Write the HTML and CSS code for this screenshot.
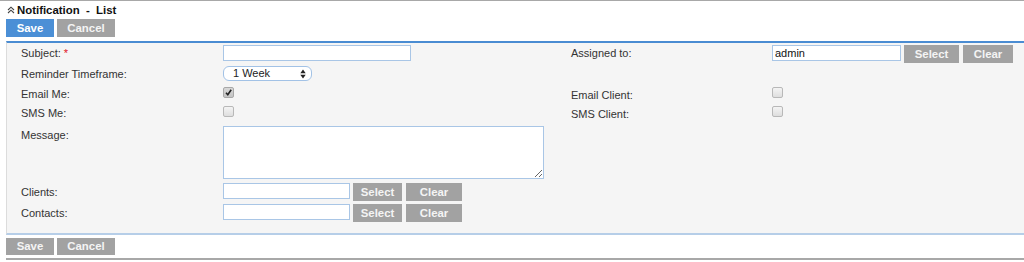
FILE: index.html
```html
<!DOCTYPE html>
<html>
<head>
<meta charset="utf-8">
<link rel="stylesheet" href="styles.css">
</head>
<body>
<div class="page">
  <div class="title">
    <svg class="ico" width="8" height="8" viewBox="0 0 8 8"><path d="M1 4 L4 1.2 L7 4 M1 7 L4 4.2 L7 7" fill="none" stroke="#444" stroke-width="1.1"/></svg>
    <span>Notification&nbsp; - &nbsp;List</span>
  </div>
  <div class="actions top-actions">
    <button class="btn btn-blue w-save">Save</button>
    <button class="btn btn-gray w-cancel">Cancel</button>
  </div>
  <div class="panel">
    <div class="grid">
      <div class="lbl">Subject: <span class="req">*</span></div>
      <div class="fld top"><input class="txt w-subject" type="text"></div>
      <div class="lbl">Assigned to:</div>
      <div class="fld top">
        <input class="txt w-assigned" type="text" value="admin">
        <button class="btn btn-gray w-sel2">Select</button>
        <button class="btn btn-gray w-clr2">Clear</button>
      </div>

      <div class="lbl">Reminder Timeframe:</div>
      <div class="fld">
        <span class="sel">1 Week
          <svg class="arrows" width="6" height="10" viewBox="0 0 6 10"><path d="M0.3 4.2 L3 0.6 L5.7 4.2 Z M0.3 5.8 L3 9.4 L5.7 5.8 Z" fill="#222"/></svg>
        </span>
      </div>
      <div></div>
      <div></div>

      <div class="lbl">Email Me:</div>
      <div class="fld"><span class="cb cb-on"><svg width="9" height="9" viewBox="0 0 9 9"><path d="M2 4.8 L3.8 6.8 L7.2 1.8" fill="none" stroke="#222" stroke-width="1.6"/></svg></span></div>
      <div class="lbl lbl-low">Email Client:</div>
      <div class="fld"><span class="cb"></span></div>

      <div class="lbl">SMS Me:</div>
      <div class="fld"><span class="cb"></span></div>
      <div class="lbl lbl-low">SMS Client:</div>
      <div class="fld"><span class="cb"></span></div>

      <div class="lbl lbl-top">Message:</div>
      <div class="fld top"><textarea class="area"></textarea></div>
      <div></div>
      <div></div>

      <div class="lbl">Clients:</div>
      <div class="fld top">
        <input class="txt w-small" type="text">
        <button class="btn btn-gray w-sel">Select</button>
        <button class="btn btn-gray w-clr">Clear</button>
      </div>
      <div></div>
      <div></div>

      <div class="lbl">Contacts:</div>
      <div class="fld top">
        <input class="txt w-small" type="text">
        <button class="btn btn-gray w-sel">Select</button>
        <button class="btn btn-gray w-clr">Clear</button>
      </div>
      <div></div>
      <div></div>
    </div>
  </div>
  <div class="actions bottom-actions">
    <button class="btn btn-gray w-save">Save</button>
    <button class="btn btn-gray w-cancel">Cancel</button>
  </div>
  <div class="endline"></div>
</div>
</body>
</html>
```

FILE: styles.css
```css
* { box-sizing: border-box; }
html, body { margin: 0; padding: 0; background: #ffffff; }
body {
  font-family: "Liberation Sans", Arial, Helvetica, sans-serif;
  font-size: 11px;
  color: #333;
  width: 1024px;
  height: 262px;
  overflow: hidden;
  border-top: 1px solid #a8a8a8;
}
.page { padding-left: 6px; }

.title {
  height: 17px;
  display: flex;
  align-items: center;
  font-weight: bold;
  color: #111;
  font-size: 11.4px;
  padding-left: 1px;
  gap: 2px;
}
.ico { display: block; margin-top: 1px; }

.actions { display: flex; gap: 3px; }
.top-actions { margin-top: 1px; height: 18px; }
.bottom-actions { margin-top: 3px; height: 17px; }

.btn {
  font-family: "Liberation Sans", Arial, Helvetica, sans-serif;
  font-size: 11.4px;
  font-weight: bold;
  color: #f4f4f4;
  border: none;
  padding: 0;
  margin: 0;
  height: 17px;
  line-height: 17px;
  text-align: center;
}
.btn-blue { background: #4b8fd6; color: #ffffff; }
.btn-gray { background: #a2a2a2; }
.top-actions .btn { height: 18px; }
.w-save { width: 48px; }
.w-cancel { width: 58px; }
.w-sel { width: 49px; height: 18px; }
.w-clr { width: 56px; height: 18px; }
.w-sel2 { width: 55px; height: 18px; }
.w-clr2 { width: 50px; height: 18px; }

.panel {
  margin-top: 4px;
  border-top: 2px solid #4a8cd2;
  border-left: 1px solid #dcdcdc;
  border-bottom: 2px solid #b6cee8;
  background: #f5f5f5;
  padding: 0 0 9px 14px;
}
.grid {
  display: grid;
  grid-template-columns: 202px 348px 201px 1fr;
  grid-template-rows: 20px 21px 19px 19px 59px 21px 22px;
}
.lbl {
  display: flex;
  align-items: center;
  color: #333;
  white-space: nowrap;
}
.lbl-low { padding-top: 3px; }
.lbl-top { align-items: flex-start; padding-top: 7px; }
.req { color: #e0101a; margin-left: 3px; }

.fld { display: flex; align-items: center; gap: 3px; }
.fld.top { align-items: flex-start; padding-top: 2px; }
.fld .btn + .btn { margin-left: 1px; }

.txt {
  height: 16px;
  border: 1px solid #a9c6e6;
  background: #fff;
  font-family: "Liberation Sans", Arial, Helvetica, sans-serif;
  font-size: 11px;
  color: #111;
  padding: 0 2px;
  margin: 0;
  outline: none;
}
.w-subject { width: 188px; }
.w-assigned { width: 129px; }
.w-small { width: 127px; }

.sel {
  position: relative;
  width: 89px;
  height: 15px;
  border: 1px solid #a2c2e6;
  border-radius: 6px;
  background: #fff;
  color: #222;
  padding-left: 9px;
  line-height: 13px;
  font-size: 11px;
}
.arrows { position: absolute; right: 5px; top: 2px; }

.cb {
  display: inline-flex;
  align-items: center;
  justify-content: center;
  width: 11px;
  height: 11px;
  border: 1px solid #b8b8b8;
  border-radius: 2px;
  background: linear-gradient(#f4f4f4, #dedede);
  margin-bottom: 2px;
}
.cb-on { background: linear-gradient(#d8d8d8, #c4c4c4); border-color: #a8a8a8; }
.cb svg { display: block; }

.area {
  margin-top: 2px;
  width: 321px;
  height: 53px;
  border: 1px solid #a9c6e6;
  background: #fff;
  resize: both;
  padding: 2px;
  font-family: "Liberation Sans", Arial, sans-serif;
  font-size: 11px;
}

.endline {
  margin-top: 3px;
  height: 2px;
  background: #a8a8a8;
}
```
